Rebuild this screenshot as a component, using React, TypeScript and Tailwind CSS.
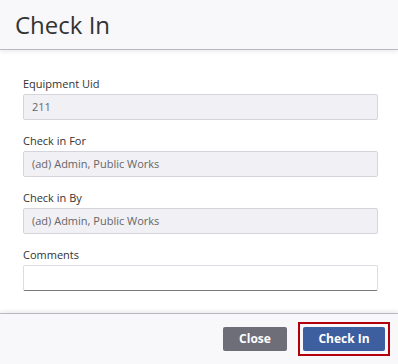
import React from "react";

interface FieldProps {
  label: string;
  value?: string;
  editable?: boolean;
}

function Field({ label, value = "", editable = false }: FieldProps) {
  return (
    <div className="flex flex-col">
      <label className="text-[11px] leading-4 text-[#333]">{label}</label>
      {editable ? (
        <input
          className="mt-[2px] h-[26px] w-full rounded-[2px] border border-[#dcdce2] border-b-[#777] bg-white px-2 text-[11px] text-[#555] outline-none"
          defaultValue={value}
        />
      ) : (
        <div className="mt-[2px] flex h-[26px] w-full items-center rounded-[2px] border border-[#d4d4da] bg-[#f0f0f5] px-2 text-[11px] text-[#666]">
          {value}
        </div>
      )}
    </div>
  );
}

export default function App() {
  return (
    <div
      className="flex h-[364px] w-[398px] flex-col overflow-hidden bg-white"
      style={{ fontFamily: '"Open Sans", "Noto Sans", sans-serif' }}
    >
      {/* Header */}
      <div className="relative z-10 flex h-[50px] shrink-0 items-center border-b border-[#b9b9c2] bg-[#f8f8fa] pl-[15px] shadow-[0_2px_4px_rgba(0,0,0,0.08)]">
        <h1 className="text-[24px] leading-none text-[#333]">Check In</h1>
      </div>

      {/* Body */}
      <div className="flex flex-1 flex-col gap-[13px] pl-[23px] pr-[20px] pt-[26px]">
        <Field label="Equipment Uid" value="211" />
        <Field label="Check in For" value="(ad) Admin, Public Works" />
        <Field label="Check in By" value="(ad) Admin, Public Works" />
        <Field label="Comments" editable />
      </div>

      {/* Footer */}
      <div className="relative flex h-[51px] shrink-0 items-center justify-end gap-[11px] border-t border-[#b9b9c2] bg-[#f8f8fa] pr-[8px] shadow-[0_-2px_4px_rgba(0,0,0,0.08)]">
        <button className="h-6 w-16 rounded-[2px] bg-[#6e6e78] text-[12px] font-bold text-white">
          Close
        </button>
        {/* focus ring */}
        <div className="border-2 border-[#b3000c] p-[3px]">
          <button className="block h-6 w-[82px] rounded-[2px] bg-[#3d5fa0] text-[12px] font-bold text-white">
            Check In
          </button>
        </div>
      </div>
    </div>
  );
}
